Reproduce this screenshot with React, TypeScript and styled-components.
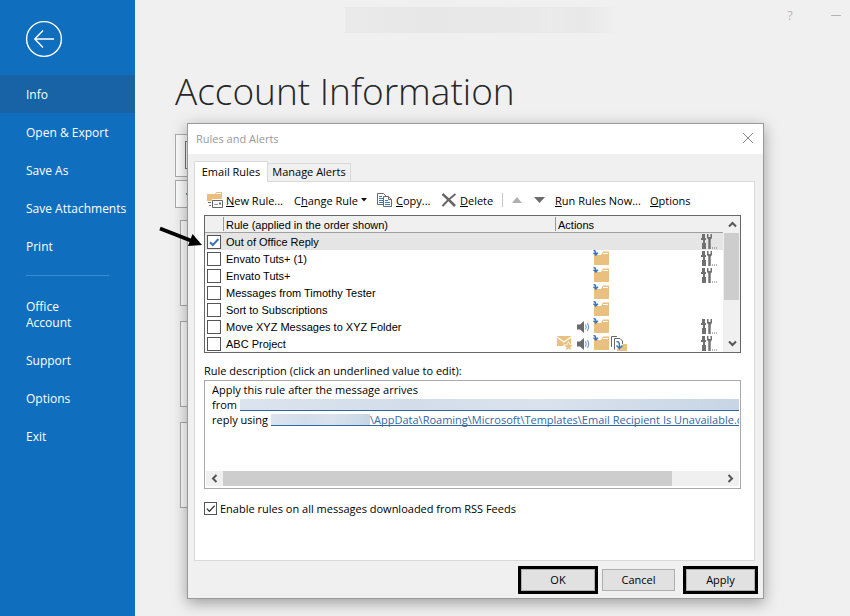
import React from "react";
import styled, { createGlobalStyle, css } from "styled-components";

const ui = `"Open Sans", "Noto Sans", sans-serif`;
const list = `"Liberation Sans", Arial, sans-serif`;

const GlobalStyle = createGlobalStyle`
  *, *::before, *::after { box-sizing: border-box; }
  body { margin: 0; background: #f0f0f0; font-family: ${ui}; font-size: 11px; color: #000; }
  button, input { font: inherit; color: inherit; margin: 0; }
`;

const Page = styled.div`
  position: relative;
  display: grid;
  grid-template-columns: 135px minmax(0, 1fr);
  min-height: 100vh;
  overflow: hidden;
`;

/* ---------- Sidebar ---------- */

const Sidebar = styled.nav`
  display: flex;
  flex-direction: column;
  background: #106ebe;
  color: #fff;
`;

const BackButton = styled.button`
  display: flex;
  align-self: flex-start;
  margin: 20px 0 17px 25px;
  padding: 0;
  border: 0;
  background: none;
`;

const NavItem = styled.a<{ $active?: boolean }>`
  padding: 12px 0 10px 26px;
  font-size: 12px;
  line-height: 16px;
  white-space: nowrap;
  color: #fff;
  text-decoration: none;
  background: ${(p) => (p.$active ? "#1763a6" : "transparent")};
`;

const NavDivider = styled.hr`
  width: 83px;
  height: 1px;
  margin: 10px 0 11px 26px;
  border: 0;
  background: #3a8bd4;
`;

/* ---------- Backstage ---------- */

const Main = styled.main`
  padding: 7px 4px 0 40px;
`;

const TopBar = styled.header`
  display: flex;
  align-items: flex-start;
  height: 56px;
  font-size: 12px;
  color: #b4b4b4;
`;

const BlurredTitle = styled.div`
  width: 272px;
  height: 26px;
  margin-left: 170px;
  margin-right: auto;
  background: linear-gradient(90deg, #eaeaea, #e7e7e7 30%, #e9e9e9 70%, #ebebeb 75%, #e8e8e8 88%, #f0f0f0);
`;

const WindowButton = styled.button`
  display: flex;
  align-items: center;
  justify-content: center;
  width: 20px;
  height: 16px;
  margin-left: 26px;
  padding: 0;
  border: 0;
  background: none;
`;

const Heading = styled.h1`
  margin: 0 0 15px;
  font-size: 37px;
  line-height: 56px;
  font-weight: 300;
  color: #262626;
`;

const Card = styled.div<{ $size: "account" | "add" | "section" }>`
  margin-right: 140px;
  border: 1px solid #ababab;
  background: #fcfcfc;
  ${(p) =>
    p.$size === "account" &&
    css`
      height: 43px;
      padding: 6px 9px;
      margin-bottom: 3px;
    `}
  ${(p) =>
    p.$size === "add" &&
    css`
      height: 28px;
      padding: 12px 10px;
      margin-bottom: 12px;
    `}
  ${(p) =>
    p.$size === "section" &&
    css`
      height: 86px;
      margin-bottom: 15px;
      margin-left: 5px;
    `}
`;

const AccountIcon = styled.div`
  width: 28px;
  height: 28px;
  border: 1px solid #777;
`;

const AddMark = styled.div`
  width: 8px;
  height: 2px;
  background: #4a9a80;
`;

const Pointer = styled.svg`
  position: absolute;
  z-index: 2;
  left: 158px;
  top: 225px;
`;

/* ---------- Dialog ---------- */

const Dialog = styled.section`
  position: absolute;
  z-index: 1;
  left: 187px;
  right: 86px;
  top: 123px;
  border: 1px solid #999;
  background: #f0f0f0;
  box-shadow: 0 4px 14px rgba(0, 0, 0, 0.35);
`;

const TitleBar = styled.header`
  display: flex;
  align-items: center;
  justify-content: space-between;
  height: 30px;
  padding: 0 9px 2px 8px;
  background: #fff;
  color: #999;
`;

const DialogTitle = styled.h2`
  margin: 0;
  font-size: 11px;
  font-weight: 400;
`;

const CloseButton = styled.button`
  display: flex;
  padding: 0;
  border: 0;
  background: none;
`;

const Tabs = styled.div`
  display: flex;
  align-items: flex-end;
  padding: 7px 6px 0;
`;

const Tab = styled.button<{ $active?: boolean }>`
  height: ${(p) => (p.$active ? "21px" : "18px")};
  width: ${(p) => (p.$active ? "74px" : "83px")};
  margin-bottom: ${(p) => (p.$active ? "-1px" : "0")};
  z-index: ${(p) => (p.$active ? 1 : 0)};
  padding: 0 0 1px;
  line-height: 16px;
  white-space: nowrap;
  border: 1px solid #d9d9d9;
  border-left-width: ${(p) => (p.$active ? "1px" : "0")};
  border-bottom: 0;
  background: ${(p) => (p.$active ? "#fff" : "#f0f0f0")};
`;

const Panel = styled.div`
  margin: 0 8px 0 6px;
  padding: 8px 13px 44px 9px;
  border: 1px solid #d9d9d9;
  background: #fff;
`;

const Toolbar = styled.div`
  display: flex;
  align-items: center;
  height: 20px;
  margin-bottom: 5px;
  padding-left: 3px;
`;

const Tool = styled.button<{ $width: number }>`
  display: flex;
  flex: none;
  align-items: center;
  gap: 3px;
  width: ${(p) => p.$width}px;
  padding: 0;
  border: 0;
  background: none;
  white-space: nowrap;

  svg { flex: none; }
`;

const ToolDivider = styled.span`
  width: 1px;
  height: 14px;
  margin-right: 9px;
  background: #c6c6c6;
`;

const RuleList = styled.div`
  display: flex;
  border: 1px solid #666;
  font-family: ${list};
`;

const RuleTable = styled.table`
  flex: 1;
  min-width: 0;
  table-layout: fixed;
  border-collapse: separate;
  border-spacing: 0;

  th, td { height: 17px; padding: 0; line-height: 16px; overflow: hidden; white-space: nowrap; text-align: left; }
`;

const CheckCol = styled.col`
  width: 18px;
`;

const ActionsCol = styled.col`
  width: 168px;
`;

const HeadCell = styled.th`
  font-weight: 400;
  background: #f0f0f0;
  border-bottom: 1px solid #a0a0a0;
`;

const HeadLabel = styled.div`
  height: 14px;
  line-height: 16px;
  padding-left: 2px;
  border-left: 1px solid #999;
`;

const Row = styled.tr<{ $selected?: boolean }>`
  background: ${(p) => (p.$selected ? "#e5e5e5" : "#fff")};
`;

const RuleName = styled.label`
  display: block;
  padding-left: 3px;
`;

const Actions = styled.div`
  display: grid;
  grid-template-columns: repeat(9, 18px);
  padding-left: 2px;
  height: 17px;
`;

const ActionSlot = styled.span<{ $slot: number }>`
  grid-column: ${(p) => p.$slot};
  grid-row: 1;
  display: flex;
`;

const Check = styled.span<{ $size: number }>`
  position: relative;
  display: block;
  flex: none;
  width: ${(p) => p.$size}px;
  height: ${(p) => p.$size}px;

  svg { position: absolute; left: 0; top: 0; pointer-events: none; }
  input:not(:checked) + svg { display: none; }
`;

const CheckInput = styled.input`
  display: block;
  appearance: none;
  width: 100%;
  height: 100%;
  border: 1px solid #555;
  background: #fff;
`;

const CheckCell = styled.div`
  padding-left: 2px;
`;

const VScroll = styled.div`
  display: flex;
  flex-direction: column;
  width: 17px;
  padding-left: 1px;
  background: #f0f0f0;
`;

const HScroll = styled.div`
  display: flex;
  height: 15px;
  margin: 0 1px 2px;
  background: #f0f0f0;
`;

const ScrollButton = styled.button`
  display: flex;
  flex: none;
  align-items: center;
  justify-content: center;
  width: 17px;
  height: 17px;
  padding: 0;
  border: 0;
  background: none;

  ${HScroll} & { height: 15px; }
`;

const VThumb = styled.div`
  height: 67px;
  margin-right: 1px;
  margin-bottom: auto;
  background: #cdcdcd;
`;

const HTrack = styled.div`
  flex: 1;
`;

const HThumb = styled.div`
  width: 90%;
  height: 100%;
  background: #cdcdcd;
`;

const DescriptionLabel = styled.div`
  margin: 10px 0 1px;
  line-height: 16px;
`;

const Description = styled.div`
  display: flex;
  flex-direction: column;
  border: 1px solid #aaa;
`;

const DescriptionText = styled.div`
  height: 90px;
  margin-right: 1px;
  padding: 1px 0 0 7px;
  line-height: 15px;
  white-space: nowrap;
  overflow: hidden;
`;

const Line = styled.div`
  display: flex;
  gap: 3px;
  height: 15px;
`;

const Redacted = styled.span<{ $width?: number }>`
  flex: ${(p) => (p.$width ? `0 0 ${p.$width}px` : "1")};
  height: 12px;
  margin-top: 2px;
  border-bottom: 1px solid #2f66a5;
  background: linear-gradient(90deg, #dbe4ee, #d3dde9 35%, #dae3ed 60%, #c7d5e4);
`;

const PathLink = styled.a`
  height: 14px;
  margin-left: -3px;
  color: #3467a4;
  border-bottom: 1px solid #2f66a5;
  text-decoration: none;
`;

const RssOption = styled.label`
  display: flex;
  align-items: center;
  gap: 3px;
  height: 16px;
  margin-top: 11px;
`;

const Footer = styled.footer`
  display: flex;
  align-items: center;
  justify-content: flex-end;
  height: 37px;
  padding: 0 5px;
`;

const Marked = styled.span`
  display: flex;
  border: 3px solid #000;

  &:last-child { margin-left: 8px; }
  &:first-child { margin-right: 4px; }
`;

const DialogButton = styled.button<{ $width: number }>`
  width: ${(p) => p.$width}px;
  height: 22px;
  padding: 0;
  line-height: 16px;
  border: 1px solid #adadad;
  background: #e1e1e1;
`;

/* ---------- Icons ---------- */

const BackIcon = () => (
  <svg width="38" height="38" viewBox="0 0 38 38" fill="none" stroke="#fff" strokeWidth="1.4">
    <circle cx="19" cy="19" r="17.4" />
    <path d="M29 19H10M18 10.5 9.8 19l8.2 8.5" />
  </svg>
);

const NewRuleIcon = () => (
  <svg width="16" height="16" viewBox="0 0 16 16">
    <path d="M0 2h8l1.500-2H15v7H5v2H0z" fill="#e8bf7c" />
    <path d="M9.500 1.500H14" stroke="#fff" />
    <path d="M5.500 8.500h10v7h-10z" fill="#fff" stroke="#666" />
    <path d="M7 12.500h4" stroke="#999" />
    <path d="M12 11.500h2" stroke="#3f78b5" strokeWidth="2" />
    <path d="M1 10.500h3M2 13.500h2" stroke="#666" />
  </svg>
);

const CopyIcon = () => (
  <svg width="16" height="16" viewBox="0 0 16 16" fill="#fff" stroke="#6a6a6a">
    <path d="M.5 1.500h6l3 3v8h-9z" />
    <path d="M2 4.500h3M2 6.500h4M2 8.500h4M2 10.500h4" stroke="#3f78b5" />
    <path d="M6.500 4.500h5l3 3v7h-8z" />
    <path d="M11.500 4.500v3h3" fill="none" />
    <path d="M8 8.500h3M8 10.500h5M8 12.500h5" stroke="#3f78b5" />
  </svg>
);

const DeleteIcon = () => (
  <svg width="16" height="16" viewBox="0 0 16 16" fill="none" stroke="#666">
    <path d="M1.500 2C5 5 10 10 14 14" strokeWidth="2.600" />
    <path d="M14.500 2C9 6 5 10 1.500 14" strokeWidth="1.900" />
  </svg>
);

const Caret = () => (
  <svg width="6" height="4" viewBox="0 0 6 4">
    <path d="M0 0h6L3 3.500z" fill="#111" />
  </svg>
);

const Triangle = ({ up }: { up?: boolean }) => (
  <svg width="11" height="6" viewBox="0 0 11 6">
    <path d={up ? "M0 6h10L5 0z" : "M0 0h11L5.500 6z"} fill={up ? "#b0b0b0" : "#6b6b6b"} />
  </svg>
);

const CloseIcon = () => (
  <svg width="12" height="12" viewBox="0 0 12 12" stroke="#888">
    <path d="m1 1 10 10M11 1 1 11" />
  </svg>
);

const FolderIcon = () => (
  <svg width="17" height="17" viewBox="0 0 17 17">
    <path d="M1 5h7l2-3.500h6V15H1z" fill="#e9c07f" />
    <path d="M10 3.500h5" stroke="#fff" />
    <path d="M0 0h6v5H0z" fill="#fff" />
    <path d="M.5 .5c1.800 0 2.300 1 2.300 4M.5 2.800 2.800 5 5 2.800" fill="none" stroke="#3c75b4" strokeWidth="1.500" />
  </svg>
);

const SpeakerIcon = () => (
  <svg width="17" height="17" viewBox="0 0 17 17">
    <path d="M2 6.500h3L9 3v12l-4-3.500H2z" fill="#6a6a6a" />
    <path d="M10.500 6.500q1.500 2.500 0 5M12.500 5q2.500 4 0 8" fill="none" stroke="#5a8ec2" />
  </svg>
);

const MailStarIcon = () => (
  <svg width="17" height="17" viewBox="0 0 17 17">
    <path d="M0 1h14v10H0z" fill="#e9c07f" />
    <path d="m0 2 7 5 7-5" fill="none" stroke="#fff" strokeWidth="1.200" />
    <path d="m11.500 6.500 1.400 3.300 3.600.2-2.800 2.300 1 3.600-3.200-2-3.200 2 1-3.600L6.500 10l3.600-.2z" fill="#e9c07f" stroke="#fff" strokeWidth=".7" />
  </svg>
);

const CopyToFolderIcon = () => (
  <svg width="17" height="17" viewBox="0 0 17 17">
    <path d="M.500 12V1.500H6M3.500 14.500v-11H9l2.500 2.500v3" fill="none" stroke="#6a6a6a" />
    <path d="M6 11h5l1-2h4v7H6z" fill="#e9c07f" />
    <path d="M5 5.500h5v8H5z" fill="#fff" />
    <path d="M5.500 6.500c3 0 3 2 3 6M5.500 10.500l3 3 3-3" fill="none" stroke="#3c75b4" strokeWidth="1.500" />
  </svg>
);

const ToolsIcon = () => (
  <svg width="17" height="17" viewBox="0 0 17 17" fill="#707070">
    <path d="M1 1h3v4h1v2H4v3h1v6H1v-6h1V7H0V5h1z" />
    <path d="M6 1h1.500v3h2V1H11v4L9.700 6.500V16H7.300V6.500L6 5z" />
    <path d="M11 14.500h1v1h-1zM13 14.500h1v1h-1zM15 14.500h1v1h-1z" />
  </svg>
);

const Tick = ({ size, color, weight }: { size: number; color: string; weight: number }) => (
  <svg width={size} height={size} viewBox="0 0 14 14" fill="none" stroke={color} strokeWidth={weight}>
    <path d="M3 7.200 5.800 10 11.500 4" />
  </svg>
);

const Chevron = ({ d }: { d: string }) => (
  <svg width="9" height="9" viewBox="0 0 9 9" fill="none" stroke="#555" strokeWidth="2">
    <path d={d} />
  </svg>
);

/* ---------- Data ---------- */

type Action = "mail" | "sound" | "move" | "copy" | "tools";

const actionIcons: Record<Action, { slot: number; Icon: () => React.ReactElement }> = {
  mail: { slot: 1, Icon: MailStarIcon },
  sound: { slot: 2, Icon: SpeakerIcon },
  move: { slot: 3, Icon: FolderIcon },
  copy: { slot: 4, Icon: CopyToFolderIcon },
  tools: { slot: 9, Icon: ToolsIcon },
};

const rules: { name: string; on?: boolean; actions: Action[] }[] = [
  { name: "Out of Office Reply", on: true, actions: ["tools"] },
  { name: "Envato Tuts+ (1)", actions: ["move", "tools"] },
  { name: "Envato Tuts+", actions: ["move", "tools"] },
  { name: "Messages from Timothy Tester", actions: ["move"] },
  { name: "Sort to Subscriptions", actions: ["move"] },
  { name: "Move XYZ Messages to XYZ Folder", actions: ["sound", "move", "tools"] },
  { name: "ABC Project", actions: ["mail", "sound", "move", "copy", "tools"] },
];

export default function App() {
  return (
    <>
      <GlobalStyle />
      <Page>
        <Sidebar>
          <BackButton aria-label="Back"><BackIcon /></BackButton>
          <NavItem href="#info" $active>Info</NavItem>
          <NavItem href="#open">Open &amp; Export</NavItem>
          <NavItem href="#save">Save As</NavItem>
          <NavItem href="#attachments">Save Attachments</NavItem>
          <NavItem href="#print">Print</NavItem>
          <NavDivider />
          <NavItem href="#account">Office<br />Account</NavItem>
          <NavItem href="#support">Support</NavItem>
          <NavItem href="#options">Options</NavItem>
          <NavItem href="#exit">Exit</NavItem>
        </Sidebar>

        <Main>
          <TopBar>
            <BlurredTitle />
            <WindowButton aria-label="Help">?</WindowButton>
            <WindowButton aria-label="Minimize">
              <svg width="10" height="1"><path d="M0 .5h10" stroke="#b4b4b4" /></svg>
            </WindowButton>
          </TopBar>
          <Heading>Account Information</Heading>
          <Card $size="account"><AccountIcon /></Card>
          <Card $size="add"><AddMark /></Card>
          <Card $size="section" />
          <Card $size="section" />
          <Card $size="section" />
        </Main>

        <Dialog role="dialog" aria-labelledby="dialog-title">
          <TitleBar>
            <DialogTitle id="dialog-title">Rules and Alerts</DialogTitle>
            <CloseButton aria-label="Close"><CloseIcon /></CloseButton>
          </TitleBar>
          <Tabs role="tablist">
            <Tab role="tab" aria-selected="true" $active>Email Rules</Tab>
            <Tab role="tab" aria-selected="false">Manage Alerts</Tab>
          </Tabs>
          <Panel role="tabpanel">
            <Toolbar>
              <Tool $width={87}><NewRuleIcon /><span><u>N</u>ew Rule...</span></Tool>
              <Tool $width={83}><span>C<u>h</u>ange Rule</span><Caret /></Tool>
              <Tool $width={64}><CopyIcon /><span><u>C</u>opy...</span></Tool>
              <Tool $width={61}><DeleteIcon /><span><u>D</u>elete</span></Tool>
              <ToolDivider />
              <Tool $width={22} aria-label="Move up"><Triangle up /></Tool>
              <Tool $width={21} aria-label="Move down"><Triangle /></Tool>
              <Tool $width={95}><span><u>R</u>un Rules Now...</span></Tool>
              <Tool $width={50}><span><u>O</u>ptions</span></Tool>
            </Toolbar>

            <RuleList>
              <RuleTable>
                <colgroup><CheckCol /><col /><ActionsCol /></colgroup>
                <thead>
                  <tr>
                    <HeadCell aria-label="Enabled" />
                    <HeadCell><HeadLabel>Rule (applied in the order shown)</HeadLabel></HeadCell>
                    <HeadCell><HeadLabel>Actions</HeadLabel></HeadCell>
                  </tr>
                </thead>
                <tbody>
                  {rules.map((rule, i) => (
                    <Row key={rule.name} $selected={i === 0}>
                      <td>
                        <CheckCell>
                          <Check $size={14}>
                            <CheckInput type="checkbox" id={`rule-${i}`} defaultChecked={rule.on} />
                            <Tick size={14} color="#3c75b4" weight={2} />
                          </Check>
                        </CheckCell>
                      </td>
                      <td><RuleName htmlFor={`rule-${i}`}>{rule.name}</RuleName></td>
                      <td>
                        <Actions>
                          {rule.actions.map((a) => {
                            const { slot, Icon } = actionIcons[a];
                            return <ActionSlot key={a} $slot={slot}><Icon /></ActionSlot>;
                          })}
                        </Actions>
                      </td>
                    </Row>
                  ))}
                </tbody>
              </RuleTable>
              <VScroll>
                <ScrollButton aria-label="Scroll up"><Chevron d="M1 6.500 4.500 3 8 6.500" /></ScrollButton>
                <VThumb />
                <ScrollButton aria-label="Scroll down"><Chevron d="M1 2.500 4.500 6 8 2.500" /></ScrollButton>
              </VScroll>
            </RuleList>

            <DescriptionLabel>Rule description (click an underlined value to edit):</DescriptionLabel>
            <Description>
              <DescriptionText>
                <Line>Apply this rule after the message arrives</Line>
                <Line><span>from</span><Redacted /></Line>
                <Line>
                  <span>reply using</span>
                  <Redacted $width={99} />
                  <PathLink href="#template">\AppData\Roaming\Microsoft\Templates\Email Recipient Is Unavailable.oft</PathLink>
                </Line>
              </DescriptionText>
              <HScroll>
                <ScrollButton aria-label="Scroll left"><Chevron d="M6.500 1 3 4.500 6.500 8" /></ScrollButton>
                <HTrack><HThumb /></HTrack>
                <ScrollButton aria-label="Scroll right"><Chevron d="M2.500 1 6 4.500 2.500 8" /></ScrollButton>
              </HScroll>
            </Description>

            <RssOption>
              <Check $size={13}>
                <CheckInput type="checkbox" defaultChecked />
                <Tick size={13} color="#333" weight={1.3} />
              </Check>
              Enable rules on all messages downloaded from RSS Feeds
            </RssOption>
          </Panel>
          <Footer>
            <Marked><DialogButton $width={74}>OK</DialogButton></Marked>
            <DialogButton $width={73}>Cancel</DialogButton>
            <Marked><DialogButton $width={69}>Apply</DialogButton></Marked>
          </Footer>
        </Dialog>

        <Pointer width="46" height="24" viewBox="0 0 46 24" aria-hidden="true">
          <path d="M2 3.500 34 16" stroke="#000" strokeWidth="4" />
          <path d="M34.500 9 44 20 30 21z" />
        </Pointer>
      </Page>
    </>
  );
}
